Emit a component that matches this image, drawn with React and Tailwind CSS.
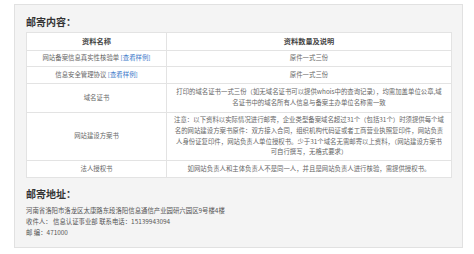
import React from "react";

const font = { fontFamily: '"Noto Sans CJK SC", "Noto Sans", sans-serif' };

function Link() {
  return <span className="text-[#3b78c9]"> [查看样例]</span>;
}

export default function App() {
  const cell = "border border-[#e3e3e3] text-center align-middle px-[2px] whitespace-nowrap";
  return (
    <div className="w-[474px] h-[254px] bg-white pt-[4px] pl-[14px] overflow-hidden" style={font}>
      <div className="w-[449px] h-[244px] bg-[#f4f4f4] border border-[#e1e1e1] pl-[11px] pt-[10px]">
        <div className="text-[10px] leading-[14px] font-bold text-[#333]">邮寄内容：</div>
        <table className="mt-[3px] w-[426px] table-fixed border-collapse bg-white text-[6.4px] leading-[10.7px] text-[#666]">
          <colgroup>
            <col className="w-[140px]" />
            <col />
          </colgroup>
          <tbody>
            <tr className="h-[18px]">
              <td className={cell + " font-bold text-[7.2px] text-[#444]"}>资料名称</td>
              <td className={cell + " font-bold text-[7.2px] text-[#444]"}>资料数量及说明</td>
            </tr>
            <tr className="h-[16px]">
              <td className={cell}>网站备案信息真实性核验单<Link /></td>
              <td className={cell}>原件一式三份</td>
            </tr>
            <tr className="h-[17px]">
              <td className={cell}>信息安全管理协议<Link /></td>
              <td className={cell}>原件一式三份</td>
            </tr>
            <tr className="h-[29px]">
              <td className={cell}>域名证书</td>
              <td className={cell}>
                打印的域名证书一式三份（如无域名证书可以提供whois中的查询记录），均需加盖单位公章,域
                <br />
                名证书中的域名所有人信息与备案主办单位名称需一致
              </td>
            </tr>
            <tr className="h-[48px]">
              <td className={cell}>网站建设方案书</td>
              <td className={cell}>
                注意：以下资料以实际情况进行邮寄，企业类型备案域名超过31个（包括31个）时须提供每个域
                <br />
                名的网站建设方案书原件：双方接入合同，组织机构代码证或者工商营业执照复印件，网站负责
                <br />
                人身份证复印件，网站负责人单位授权书。少于31个域名无需邮寄以上资料，（网站建设方案书
                <br />
                可自行撰写，无格式要求）
              </td>
            </tr>
            <tr className="h-[17px]">
              <td className={cell}>法人授权书</td>
              <td className={cell}>如网站负责人和主体负责人不是同一人，并且是网站负责人进行核验，需提供授权书。</td>
            </tr>
          </tbody>
        </table>
        <div className="mt-[9px] text-[10px] leading-[14px] font-bold text-[#333]">邮寄地址：</div>
        <div className="mt-[4px] text-[6.4px] leading-[11px] text-[#555]">
          <div>河南省洛阳市洛龙区太康路东段洛阳信息通信产业园研六园区9号楼4楼</div>
          <div>收件人： 信息认证事业部 联系电话：15139943094</div>
          <div>邮 编：471000</div>
        </div>
      </div>
    </div>
  );
}
